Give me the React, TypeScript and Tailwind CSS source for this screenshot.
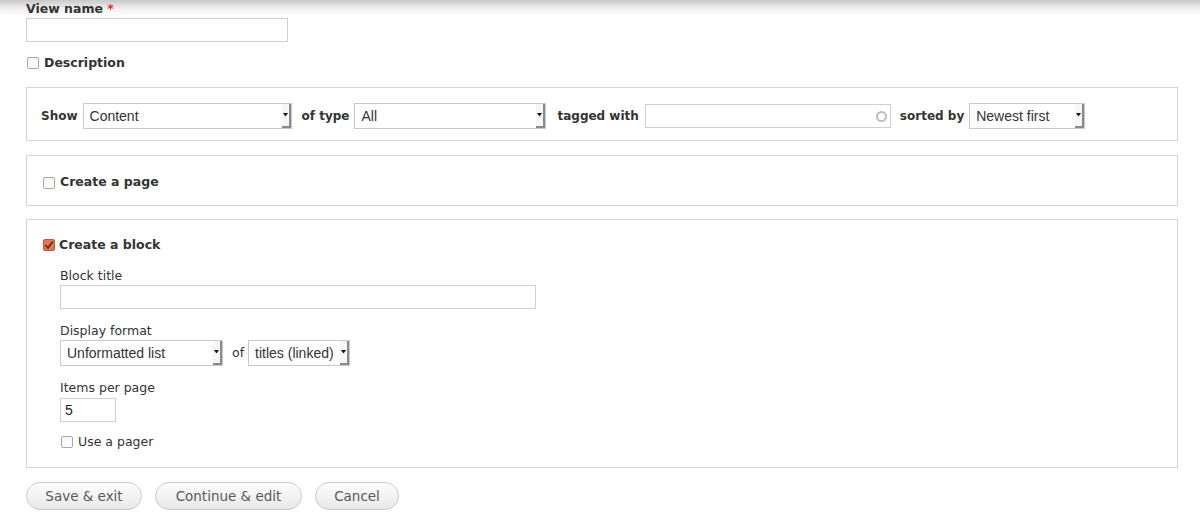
import React from "react";

const Checkbox = ({ checked = false }: { checked?: boolean }) =>
  checked ? (
    <span className="inline-flex h-[12px] w-[12px] items-center justify-center rounded-[2px] border border-[#c0573a] bg-[#e27553]">
      <svg width="10" height="10" viewBox="0 0 10 10">
        <path d="M1.5 5 L4 8 L8.8 1.5" fill="none" stroke="#5a2a1c" strokeWidth="1.6" />
      </svg>
    </span>
  ) : (
    <span className="inline-block h-[12px] w-[12px] rounded-[2px] border border-[#a8a8a8] bg-gradient-to-b from-[#f4f4f4] to-white" />
  );

const Select = ({ value, width }: { value: string; width: number }) => (
  <div
    className="flex h-[26px] items-stretch border border-[#c9c9c9] bg-white"
    style={{ width }}
  >
    <span className="flex-1 truncate pl-[6px] font-['Liberation_Sans',Arial,sans-serif] text-[14px] leading-[24px] text-[#333]">
      {value}
    </span>
    <span className="flex w-[9px] items-center justify-center border-r-2 border-b-2 border-[#8a8a8a] bg-[#f6f6f6]">
      <svg width="5" height="4" viewBox="0 0 5 4">
        <path d="M0 0 H5 L2.5 3.5 Z" fill="#111" />
      </svg>
    </span>
  </div>
);

const TextInput = ({ width, value = "" }: { width: number; value?: string }) => (
  <div
    className="h-[24px] border border-[#cfcfcf] bg-white pl-[4px] font-['Liberation_Sans',Arial,sans-serif] text-[14px] leading-[22px] text-[#222]"
    style={{ width }}
  >
    {value}
  </div>
);

const Button = ({ label, width }: { label: string; width: number }) => (
  <button
    className="h-[28px] rounded-full border border-[#cacaca] bg-gradient-to-b from-[#fdfdfd] to-[#e8e8e8] text-[13.5px] text-[#5a5a5a]"
    style={{ width }}
  >
    {label}
  </button>
);

export default function App() {
  return (
    <div className="relative h-[512px] w-[1200px] overflow-hidden bg-white font-['DejaVu_Sans',sans-serif] text-[12.5px] text-[#333]">
      <div className="absolute left-0 right-0 top-0 h-[16px] bg-gradient-to-b from-[#c8c8c8] via-[#eeeeee] to-transparent" />

      <div className="relative pl-[26px] pr-[22px] pt-[1px]">
        <div className="h-[17px] font-bold leading-[16px]">
          View name <span className="text-[#e0301e]">*</span>
        </div>
        <TextInput width={262} />

        <div className="mt-[13px] flex h-[16px] items-center gap-[5px] pl-[1px]">
          <Checkbox />
          <span className="font-bold">Description</span>
        </div>

        <fieldset className="mt-[16px] flex h-[54px] items-start border border-[#d4d4d4] pl-[14px] pt-[15px] text-[12px]">
          <span className="font-bold leading-[26px]">Show</span>
          <span className="ml-[5px]">
            <Select value="Content" width={209} />
          </span>
          <span className="ml-[10px] font-bold leading-[26px]">of type</span>
          <span className="ml-[5px]">
            <Select value="All" width={192} />
          </span>
          <span className="ml-[11px] font-bold leading-[26px]">tagged with</span>
          <div className="relative ml-[6px] mt-[1px] h-[24px] w-[246px] border border-[#cfcfcf] bg-white">
            <span className="absolute right-[3px] top-[6px] h-[11px] w-[11px] rounded-full border-2 border-[#bdbdbd]" />
          </div>
          <span className="ml-[9px] font-bold leading-[26px]">sorted by</span>
          <span className="ml-[5px]">
            <Select value="Newest first" width={116} />
          </span>
        </fieldset>

        <fieldset className="mt-[14px] flex h-[51px] items-center gap-[5px] border border-[#d4d4d4] pl-[16px] pt-[4px]">
          <Checkbox />
          <span className="font-bold">Create a page</span>
        </fieldset>

        <fieldset className="mt-[13px] h-[249px] border border-[#d4d4d4] pl-[16px] pt-[17px]">
          <div className="flex h-[16px] items-center gap-[4px]">
            <Checkbox checked />
            <span className="font-bold">Create a block</span>
          </div>

          <div className="pl-[17px]">
            <div className="mt-[15px] h-[16px] leading-[16px]">Block title</div>
            <div className="mt-[1px]">
              <TextInput width={476} />
            </div>

            <div className="mt-[14px] h-[16px] leading-[16px]">Display format</div>
            <div className="mt-[1px] flex items-center">
              <Select value="Unformatted list" width={163} />
              <span className="ml-[9px] mr-[4px]">of</span>
              <Select value="titles (linked)" width={102} />
            </div>

            <div className="mt-[14px] h-[16px] leading-[16px]">Items per page</div>
            <div className="mt-[2px]">
              <TextInput width={56} value="5" />
            </div>

            <div className="mt-[12px] flex h-[16px] items-center gap-[5px] pl-[1px]">
              <Checkbox />
              <span>Use a pager</span>
            </div>
          </div>
        </fieldset>

        <div className="mt-[14px] flex gap-[13px]">
          <Button label="Save & exit" width={116} />
          <Button label="Continue & edit" width={147} />
          <Button label="Cancel" width={84} />
        </div>
      </div>
    </div>
  );
}
